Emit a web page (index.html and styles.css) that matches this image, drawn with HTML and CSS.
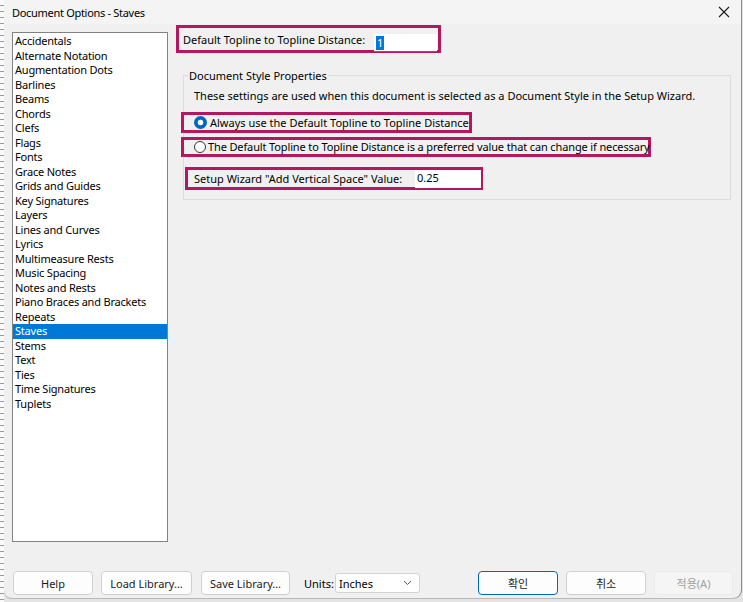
FILE: index.html
```html
<!DOCTYPE html>
<html lang="en">
<head>
    <meta charset="UTF-8">
    <title>Document Options - Staves</title>
    <link rel="stylesheet" href="styles.css">
</head>
<body>

<div class="stage">
    <div class="score-strip"></div>

    <div class="window">
        <div class="titlebar">
            <span class="title">Document Options - Staves</span>
            <svg class="close" width="12" height="12" viewBox="0 0 12 12">
                <path d="M1 1 L11 11 M11 1 L1 11" stroke="#1a1a1a" stroke-width="1.1" fill="none"/>
            </svg>
        </div>

        <div class="content">
            <ul class="category-list">
                <li>Accidentals</li>
                <li>Alternate Notation</li>
                <li>Augmentation Dots</li>
                <li>Barlines</li>
                <li>Beams</li>
                <li>Chords</li>
                <li>Clefs</li>
                <li>Flags</li>
                <li>Fonts</li>
                <li>Grace Notes</li>
                <li>Grids and Guides</li>
                <li>Key Signatures</li>
                <li>Layers</li>
                <li>Lines and Curves</li>
                <li>Lyrics</li>
                <li>Multimeasure Rests</li>
                <li>Music Spacing</li>
                <li>Notes and Rests</li>
                <li>Piano Braces and Brackets</li>
                <li>Repeats</li>
                <li class="selected">Staves</li>
                <li>Stems</li>
                <li>Text</li>
                <li>Ties</li>
                <li>Time Signatures</li>
                <li>Tuplets</li>
            </ul>

            <div class="panel">
                <div class="mark distance-row">
                    <span>Default Topline to Topline Distance:</span>
                    <span class="field distance-field"><span class="sel-text">1</span></span>
                </div>

                <fieldset class="group">
                    <legend>Document Style Properties</legend>
                    <p class="note">These settings are used when this document is selected as a Document Style in the Setup Wizard.</p>

                    <div class="mark radio-row radio-first">
                        <span class="radio checked"></span>
                        <span>Always use the Default Topline to Topline Distance</span>
                    </div>
                    <div class="mark radio-row radio-second">
                        <span class="radio"></span>
                        <span class="long-text">The Default Topline to Topline Distance is a preferred value that can change if necessary</span>
                    </div>

                    <div class="mark wizard-row">
                        <span>Setup Wizard "Add Vertical Space" Value:</span>
                        <span class="field wizard-field">0.25</span>
                    </div>
                </fieldset>
            </div>
        </div>

        <div class="footer">
            <button class="btn btn-help">Help</button>
            <button class="btn btn-load">Load Library…</button>
            <button class="btn btn-save">Save Library…</button>
            <span class="units-label">Units:</span>
            <span class="units-select">
                <span>Inches</span>
                <svg width="9" height="6" viewBox="0 0 9 6">
                    <path d="M1 1 L4.5 4.5 L8 1" stroke="#555" stroke-width="1" fill="none"/>
                </svg>
            </span>
            <button class="btn btn-ok">확인</button>
            <button class="btn btn-cancel">취소</button>
            <button class="btn btn-apply" disabled>적용(A)</button>
        </div>
    </div>
</div>

</body>
</html>
```

FILE: styles.css
```css
body {
    margin: 0;
    background-color: #e4e4e4;
    font-family: "Noto Sans", "Noto Sans CJK KR", sans-serif;
    font-size: 11px;
    line-height: 15px;
    color: #000;
}

.stage {
    display: flex;
    height: 602px;
    overflow: hidden;
}

.score-strip {
    width: 4px;
    height: 602px;
    background-color: #fafafa;
    background-image: repeating-linear-gradient(to bottom, transparent 0, transparent 5px, #9a9a9a 5px, #9a9a9a 6px);
    background-size: 4px 30px;
}

.window {
    width: 737px;
    height: 598px;
    background-color: #f0f0f0;
    border-radius: 0 0 8px 8px;
    box-shadow: 1px 0 0 #8a8a8a, 0 1px 0 #b8b8b8;
    display: flex;
    flex-direction: column;
}

.titlebar {
    height: 24px;
    background-color: #f3f4f3;
    display: flex;
    align-items: center;
    justify-content: space-between;
    padding: 0 11px 0 8px;
}

.title {
    letter-spacing: -0.3px;
}

.content {
    display: flex;
    align-items: flex-start;
    padding-left: 8px;
    height: 539px;
}

.category-list {
    list-style: none;
    margin: 8px 0 0;
    padding: 1px 0 0;
    width: 154px;
    height: 507px;
    background-color: #fff;
    border: 1px solid #828282;
    letter-spacing: -0.2px;
}

.category-list li {
    height: 14.5px;
    line-height: 14.5px;
    padding-left: 2px;
    white-space: nowrap;
}

.category-list li.selected {
    background-color: #0078d7;
    color: #fff;
}

.panel {
    margin: 1px 0 0 8px;
    width: 556px;
    white-space: nowrap;
}

.mark {
    border: 3px solid #b3185f;
    display: flex;
    align-items: center;
    box-sizing: border-box;
}

.distance-row {
    width: 265px;
    height: 28px;
    padding: 0 1px 0 4px;
    justify-content: space-between;
}

.field {
    background-color: #fff;
    display: inline-block;
}

.distance-field {
    width: 63px;
    height: 17px;
    align-self: flex-end;
    margin-bottom: -2px;
    border-bottom: 1px solid #5a6b8c;
}

.sel-text {
    display: inline-block;
    background-color: #0078d7;
    color: #fff;
    line-height: 14px;
    padding: 0 1px;
    margin: 2px 0 0 2px;
}

.group {
    margin: 15px 0 0 7px;
    width: 548px;
    box-sizing: border-box;
    border: 1px solid #dcdcdc;
    padding: 0 0 9px;
}

.group legend {
    margin-left: 4px;
    padding: 0 1px;
}

.note {
    margin: 5px 0 0 10px;
}

.radio-row {
    margin-left: -3px;
    height: 21px;
    padding-left: 10px;
    gap: 3px;
}

.radio-first {
    width: 291px;
    margin-top: 9px;
}

.radio-second {
    width: 470px;
    height: 20px;
    margin-top: 4px;
    gap: 2px;
    align-items: flex-start;
}

.radio-second .radio {
    margin-top: 1px;
}

.long-text {
    letter-spacing: -0.13px;
    line-height: 13px;
}

.radio {
    flex-shrink: 0;
    width: 12px;
    height: 12px;
    border: 1px solid #333;
    border-radius: 50%;
    background-color: #fff;
    box-sizing: border-box;
}

.radio.checked {
    border: none;
    width: 13px;
    height: 13px;
    background: radial-gradient(circle, #fff 0, #fff 2.5px, #0067c0 3.2px);
}

.wizard-row {
    margin: 10px 0 0 1px;
    width: 298px;
    height: 23px;
    padding: 0 0 0 6px;
    justify-content: space-between;
}

.wizard-field {
    margin-right: -1px;
    width: 66px;
    height: 18px;
    line-height: 15px;
    padding-left: 2px;
    box-sizing: border-box;
}

.footer {
    display: flex;
    align-items: center;
    padding: 8px 8px 0 9px;
}

.btn {
    font-family: "Noto Sans", "Noto Sans CJK KR", sans-serif;
    font-size: 11px;
    height: 24px;
    background-color: #fdfdfd;
    border: 1px solid #d0d0d0;
    border-radius: 4px;
    color: #1a1a1a;
    padding: 0;
    margin: 0;
}

.btn-help { width: 80px; }
.btn-load { width: 91px; margin-left: 8px; }
.btn-save { width: 89px; margin-left: 9px; }

.units-label {
    margin-left: 14px;
    width: 31px;
}

.units-select {
    width: 85px;
    height: 20px;
    box-sizing: border-box;
    background-color: #fff;
    border: 1px solid #d3d3d3;
    border-radius: 3px;
    display: flex;
    align-items: center;
    justify-content: space-between;
    padding: 0 7px 0 3px;
}

.btn-ok {
    width: 80px;
    margin-left: auto;
    border-color: #0067c0;
}

.btn-cancel { width: 80px; margin-left: 8px; }

.btn-apply {
    width: 79px;
    margin-left: 8px;
    background-color: #f5f5f5;
    border-color: #ebebeb;
    color: #a0a0a0;
}
```
